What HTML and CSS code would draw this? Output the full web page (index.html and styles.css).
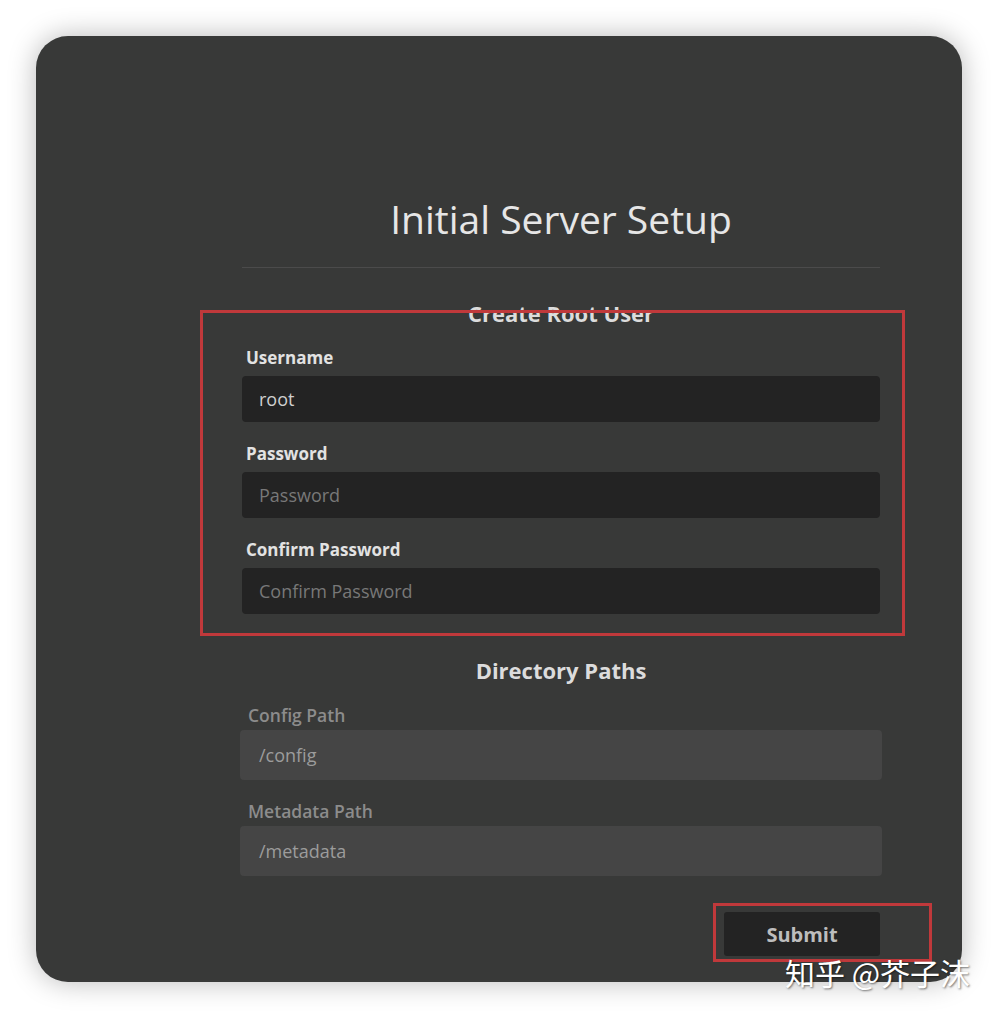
FILE: index.html
```html
<!DOCTYPE html>
<html>
<head>
<meta charset="utf-8">
<link rel="stylesheet" href="styles.css">
</head>
<body>
<div class="card">
  <div class="content">
    <h1 class="title">Initial Server Setup</h1>
    <div class="rule"></div>
    <h2 class="section">Create Root User</h2>
    <div class="field">
      <label class="label">Username</label>
      <div class="input">root</div>
    </div>
    <div class="field">
      <label class="label">Password</label>
      <div class="input placeholder">Password</div>
    </div>
    <div class="field">
      <label class="label">Confirm Password</label>
      <div class="input placeholder">Confirm Password</div>
    </div>
    <h2 class="section dir">Directory Paths</h2>
    <div class="field path">
      <label class="label muted">Config Path</label>
      <div class="input light">/config</div>
    </div>
    <div class="field path">
      <label class="label muted">Metadata Path</label>
      <div class="input light">/metadata</div>
    </div>
    <div class="actions">
      <button class="submit">Submit</button>
    </div>
  </div>
  <div class="mark mark-user"></div>
  <div class="mark mark-submit"></div>
</div>
<div class="watermark">知乎 @芥子沫</div>
</body>
</html>
```
FILE: styles.css
```css
html, body {
  margin: 0;
  padding: 0;
  background: #ffffff;
}
body {
  width: 998px;
  height: 1018px;
  position: relative;
  font-family: "Open Sans", "Noto Sans", sans-serif;
}
.card {
  position: relative;
  margin: 36px 0 0 36px;
  width: 926px;
  height: 946px;
  box-sizing: border-box;
  border-radius: 32px;
  background: #383938;
  box-shadow: 0 0 28px rgba(0, 0, 0, 0.28);
  padding: 157px 82px 0 206px;
}
.content {
  display: flex;
  flex-direction: column;
}
.title {
  margin: 0;
  font-size: 39px;
  line-height: 52px;
  font-weight: 400;
  color: #e6e6e6;
  text-align: center;
}
.rule {
  margin-top: 22px;
  height: 1px;
  background: #4b4b4b;
}
.section {
  margin: 31px 0 0;
  font-size: 22px;
  line-height: 28px;
  font-weight: 700;
  color: #dcdcdc;
  text-align: center;
}
.section.dir {
  margin-top: 41px;
  font-size: 22px;
  line-height: 30px;
}
.field {
  display: flex;
  flex-direction: column;
  margin-top: 20px;
}
.field + .field {
  margin-top: 21px;
}
.label {
  font-size: 17px;
  line-height: 22px;
  font-weight: 700;
  color: #e2e2e2;
  padding-left: 4px;
  margin-bottom: 7px;
}
.label.muted {
  font-size: 17.5px;
  font-weight: 600;
  color: #8c8c8c;
  line-height: 20px;
  margin-bottom: 5px;
  padding-left: 6px;
}
.input {
  height: 46px;
  box-sizing: border-box;
  border-radius: 4px;
  background: #232323;
  color: #cfcfcf;
  font-size: 18px;
  line-height: 46px;
  padding-left: 17px;
}
.input.placeholder {
  color: #787878;
}
.path .input.light {
  height: 50px;
  line-height: 50px;
  margin: 0 -2px;
  background: #454545;
  color: #9c9c9c;
  padding-left: 19px;
}
.actions {
  display: flex;
  justify-content: flex-end;
  margin-top: 36px;
}
.submit {
  width: 156px;
  height: 44px;
  border: none;
  border-radius: 3px;
  background: #232323;
  color: #bdbdbd;
  font-family: "Open Sans", "Noto Sans", sans-serif;
  font-size: 20px;
  font-weight: 700;
}
.mark {
  position: absolute;
  border: 3px solid #c0393b;
  box-sizing: border-box;
}
.mark-user {
  left: 164px;
  top: 274px;
  width: 705px;
  height: 326px;
}
.mark-submit {
  left: 677px;
  top: 867px;
  width: 219px;
  height: 59px;
}
.watermark {
  position: absolute;
  left: 785px;
  top: 951px;
  font-family: "Noto Sans CJK SC", sans-serif;
  font-size: 30px;
  line-height: 42px;
  color: #ffffff;
  text-shadow: 1px 1px 2px rgba(0, 0, 0, 0.5);
  white-space: nowrap;
}
```
